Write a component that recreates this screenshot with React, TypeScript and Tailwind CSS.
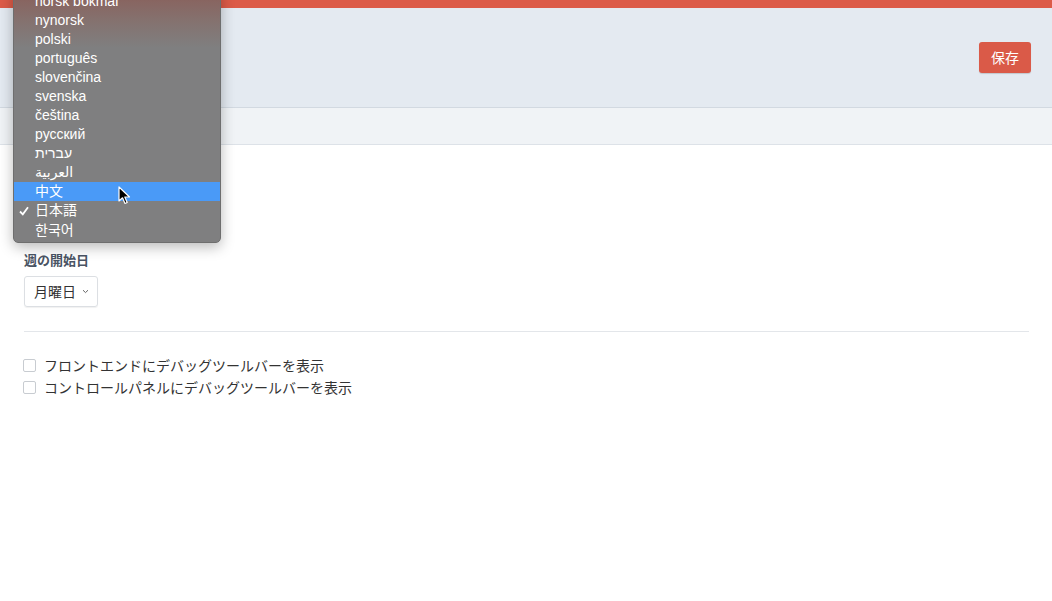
import React from "react";

const langs = [
  "norsk bokmål",
  "nynorsk",
  "polski",
  "português",
  "slovenčina",
  "svenska",
  "čeština",
  "русский",
  "עברית",
  "العربية",
  "中文",
  "日本語",
  "한국어",
];

function Chevron() {
  return (
    <svg width="7" height="5" viewBox="0 0 7 5" className="ml-[6px] shrink-0">
      <path d="M1 1.2 L3.5 3.6 L6 1.2" fill="none" stroke="#666" strokeWidth="1" />
    </svg>
  );
}

function Cursor() {
  return (
    <svg width="14" height="20" viewBox="0 0 14 20" className="absolute left-[118px] top-[186px]">
      <path d="M1 1 L1 15 L4.5 11.8 L7 17.5 L9.2 16.5 L6.8 11 L11.5 11 Z" fill="#000" stroke="#fff" strokeWidth="1.2" strokeLinejoin="round" />
    </svg>
  );
}

export default function App() {
  return (
    <div
      className="relative w-[1052px] h-[601px] overflow-hidden bg-white"
      style={{ fontFamily: '"Liberation Sans", "Noto Sans CJK JP", sans-serif' }}
    >
      <div className="h-[8px] bg-[#dc5b48]" />
      <div className="h-[100px] bg-[#e4eaf1] border-b border-[#d2d9e1] flex items-start justify-end pr-[21px] pt-[34px]">
        <button className="h-[31px] w-[52px] rounded-[3px] bg-[#da5a48] text-white text-[14px] shadow-[0_1px_1px_rgba(0,0,0,0.15)]" style={{ fontFamily: '"Noto Sans CJK JP", sans-serif' }}>
          保存
        </button>
      </div>
      <div className="h-[37px] bg-[#f0f3f6] border-b border-[#dde2e8]" />
      <div className="px-[24px] pr-[23px]" style={{ fontFamily: '"Noto Sans CJK JP", sans-serif' }}>
        <div className="pt-[105px]">
          <div className="text-[13px] font-bold text-[#4a5464] leading-[20px]">週の開始日</div>
          <div className="mt-[6px] inline-flex items-center whitespace-nowrap h-[31px] pl-[9px] pr-[8px] border border-[#dcdfe3] rounded-[3px] text-[14px] text-[#333] shadow-[0_1px_1px_rgba(0,0,0,0.06)]">
            月曜日
            <Chevron />
          </div>
        </div>
        <div className="mt-[24px] border-t border-[#e3e6ea]" />
        <div className="pt-[22px] flex flex-col">
          {["フロントエンドにデバッグツールバーを表示", "コントロールパネルにデバッグツールバーを表示"].map((t) => (
            <label key={t} className="flex items-center h-[22px] text-[14px] text-[#333]">
              <span className="w-[13px] h-[13px] ml-[-1px] mr-[8px] border border-[#c8ccd1] rounded-[2px] bg-white" />
              {t}
            </label>
          ))}
        </div>
      </div>

      {/* dropdown menu overlay */}
      <div
        className="absolute left-[13px] top-[-13px] w-[208px] h-[256px] rounded-[5px] border border-[#6e6e6e] shadow-[0_4px_14px_rgba(0,0,0,0.28)] py-[4px]"
        style={{ background: "linear-gradient(to bottom, #8a5d58 0px, #85706d 30px, #7f7f80 60px, #7f7f80 100%)", fontFamily: '"Liberation Sans", "DejaVu Sans", "Noto Sans CJK JP", "Noto Sans CJK KR", sans-serif' }}
      >
        {langs.map((l) => (
          <div
            key={l}
            className={`relative h-[19px] flex items-center pl-[21px] text-[14px] text-white ${l === "中文" ? "bg-[#4a9af7]" : ""}`}
          >
            {l === "日本語" && (
              <svg width="10" height="10" viewBox="0 0 10 10" className="absolute left-[5px] top-[5px]">
                <path d="M1 5.5 L3.8 8.3 L9 1.2" fill="none" stroke="#fff" strokeWidth="1.8" />
              </svg>
            )}
            <span style={{ fontFamily: l === "한국어" ? '"Noto Sans CJK KR", sans-serif' : undefined }}>{l}</span>
          </div>
        ))}
      </div>
      <Cursor />
    </div>
  );
}
